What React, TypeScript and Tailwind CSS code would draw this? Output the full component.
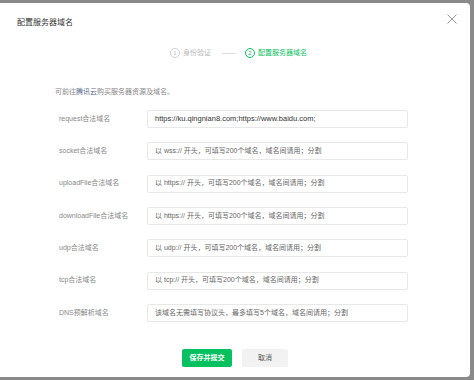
import React from "react"

// Rows of the domain form
const rows: { label: string; value?: string; placeholder?: string }[] = [
  { label: "request合法域名", value: "https://ku.qingnian8.com;https://www.baidu.com;" },
  { label: "socket合法域名", placeholder: "以 wss:// 开头，可填写200个域名，域名间请用；分割" },
  { label: "uploadFile合法域名", placeholder: "以 https:// 开头，可填写200个域名，域名间请用；分割" },
  { label: "downloadFile合法域名", placeholder: "以 https:// 开头，可填写200个域名，域名间请用；分割" },
  { label: "udp合法域名", placeholder: "以 udp:// 开头，可填写200个域名，域名间请用；分割" },
  { label: "tcp合法域名", placeholder: "以 tcp:// 开头，可填写200个域名，域名间请用；分割" },
  { label: "DNS预解析域名", placeholder: "该域名无需填写协议头，最多填写5个域名，域名间请用；分割" },
]

export default function App() {
  return (
    <div
      className="w-[474px] h-[380px] bg-[#8a8a8a] pt-[3px] overflow-hidden"
      style={{ fontFamily: '"Liberation Sans", "Noto Sans CJK SC", sans-serif' }}
    >
      <div className="w-[470px] h-[374px] bg-white rounded-r-[4px] flex flex-col">
        {/* Header */}
        <div className="flex items-start h-[30px]">
          <div className="mt-[15px] ml-[17px] text-[8px] leading-[10px] text-[#333]">配置服务器域名</div>
          <svg className="ml-auto mt-[11px] mr-[13px]" width="10" height="10" viewBox="0 0 10 10">
            <path d="M0.5 0.5 L9.5 9.5 M9.5 0.5 L0.5 9.5" stroke="#9a9a9a" strokeWidth="1" />
          </svg>
        </div>

        {/* Steps */}
        <div className="mt-[15px] ml-[170px] flex items-center h-[10px] text-[7px] leading-[10px]">
          <div className="w-[10px] h-[10px] rounded-full border border-[#cfcfcf] text-[#bbb] flex items-center justify-center text-[6px]">1</div>
          <span className="ml-[3px] text-[#bbb]">身份验证</span>
          <div className="ml-[11px] w-[14px] h-px bg-[#ddd]" />
          <div className="ml-[9px] w-[10px] h-[10px] rounded-full border border-[#07c160] text-[#07c160] flex items-center justify-center text-[6px]">2</div>
          <span className="ml-[3px] text-[#07c160]">配置服务器域名</span>
        </div>

        {/* Description */}
        <div className="mt-[29px] ml-[55px] text-[7px] leading-[10px] text-[#888]">
          可前往<span className="text-[#576b95]">腾讯云</span>购买服务器资源及域名。
        </div>

        {/* Form */}
        <div className="mt-[13px] ml-[59px] flex flex-col gap-[14.33px]">
          {rows.map((r) => (
            <div key={r.label} className="flex items-center h-[18px]">
              <div className="w-[88px] text-[7px] text-[#888]">{r.label}</div>
              <div className="w-[261px] h-[18px] border border-[#e8e8e8] rounded-[2px] flex items-center pl-[7px] whitespace-nowrap overflow-hidden">
                {r.value ? (
                  <span className="text-[7.5px] text-[#333]">{r.value}</span>
                ) : (
                  <span className="text-[7px] text-[#666]">{r.placeholder}</span>
                )}
              </div>
            </div>
          ))}
        </div>

        {/* Buttons */}
        <div className="mt-[27px] flex justify-center gap-[10px]">
          <button className="w-[50px] h-[18px] rounded-[2px] bg-[#07c160] text-white text-[7px] font-bold">保存并提交</button>
          <button className="w-[46px] h-[18px] rounded-[2px] bg-[#f2f2f2] text-[#555] text-[7px]">取消</button>
        </div>
      </div>
    </div>
  )
}
